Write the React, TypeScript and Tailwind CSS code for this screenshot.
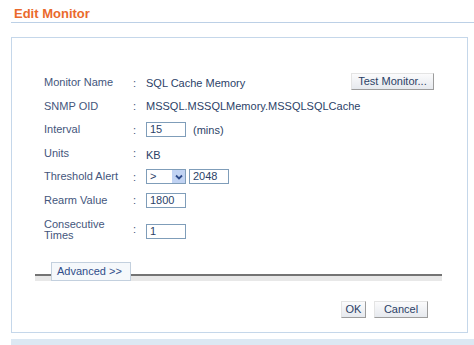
import React from 'react';

const Row = ({ label, children, tall }: { label: React.ReactNode; children: React.ReactNode; tall?: boolean }) => (
  <div className={`flex items-center ${tall ? 'h-[35px]' : 'h-[23.5px]'}`}>
    <div className="w-[89px] leading-[11px] text-[#44567c]">{label}</div>
    <div className="w-[13px] text-[#44567c]">:</div>
    <div className="flex flex-1 items-center text-[#2c3f68]">{children}</div>
  </div>
);

const TextBox = ({ value, className = '' }: { value: string; className?: string }) => (
  <div
    className={`flex h-[15px] w-[40px] items-center border border-[#7f9db9] bg-white pl-[3px] text-[11px] leading-none text-[#2c3f68] ${className}`}
  >
    {value}
  </div>
);

const Btn = ({ children, className = '' }: { children: React.ReactNode; className?: string }) => (
  <button
    className={`flex h-[17px] items-center justify-center border border-t-[#e4e4e4] border-l-[#e4e4e4] border-r-[#9c9c9c] border-b-[#9c9c9c] bg-gradient-to-b from-[#fbfbfc] to-[#e6e9ee] text-[11px] leading-none text-[#2b3f66] ${className}`}
  >
    {children}
  </button>
);

const SelectBox = () => (
  <div className="flex h-[15px] w-[40px] items-center border border-[#7f9db9] bg-white">
    <span className="flex-1 pl-[3px] text-[11px] leading-none text-[#2c3f68]">&gt;</span>
    <span className="flex h-[13px] w-[13px] items-center justify-center bg-[#c1d3f3]">
      <svg width="8" height="6" viewBox="0 0 8 6">
        <path d="M1 1.5 L4 4.5 L7 1.5" fill="none" stroke="#2d4a8a" strokeWidth="1.8" />
      </svg>
    </span>
  </div>
);

export default function App() {
  return (
    <div className="h-[345px] w-[474px] overflow-hidden bg-white font-['Liberation_Sans',Arial,sans-serif] text-[11px]">
      <div className="pl-[11px]">
        <div className="h-[23px] border-b border-[#bcd0e6] pl-[3px] pt-[7px] text-[13px] font-bold leading-none text-[#ea6a2c]">
          Edit Monitor
        </div>
        <div className="mr-[6px] mt-[14px] h-[296px] border border-[#c5d7ea] pl-[23px] pr-[25px] pt-[33px]">
          <div className="pl-[9px] pr-[8px]">
            <Row label="Monitor Name">
              <span className="flex-1">SQL Cache Memory</span>
              <Btn className="-mt-[2px] w-[83px]">Test Monitor...</Btn>
            </Row>
            <Row label="SNMP OID">MSSQL.MSSQLMemory.MSSQLSQLCache</Row>
            <Row label="Interval">
              <TextBox value="15" />
              <span className="ml-[7px]">(mins)</span>
            </Row>
            <Row label="Units">
              <span className="pt-[3px]">KB</span>
            </Row>
            <Row label="Threshold Alert">
              <SelectBox />
              <TextBox value="2048" className="ml-[3px]" />
            </Row>
            <Row label="Rearm Value">
              <TextBox value="1800" />
            </Row>
            <Row
              tall
              label={
                <>
                  Consecutive
                  <br />
                  Times
                </>
              }
            >
              <TextBox value="1" className="mt-[4px]" />
            </Row>
          </div>

          <div className="relative mt-[15px] h-[19px]">
            <div className="absolute left-0 right-0 top-[12px] h-[2px] bg-[#747474]" />
            <div className="absolute left-0 right-0 top-[14px] h-[5px] bg-[#e8e8e8]" />
            <div className="relative ml-[16px] flex h-[19px] w-[80px] items-center border border-[#c3d0de] bg-[#f5f8fb] pl-[5px] text-[11px] leading-none text-[#2f4d8a]">
              Advanced &gt;&gt;
            </div>
          </div>

          <div className="mt-[20px] flex justify-end gap-[8px] pr-[14px]">
            <Btn className="w-[25px]">OK</Btn>
            <Btn className="w-[54px]">Cancel</Btn>
          </div>
        </div>
        <div className="mt-[6px] h-[6px] bg-[#dce8f3]" />
      </div>
    </div>
  );
}
